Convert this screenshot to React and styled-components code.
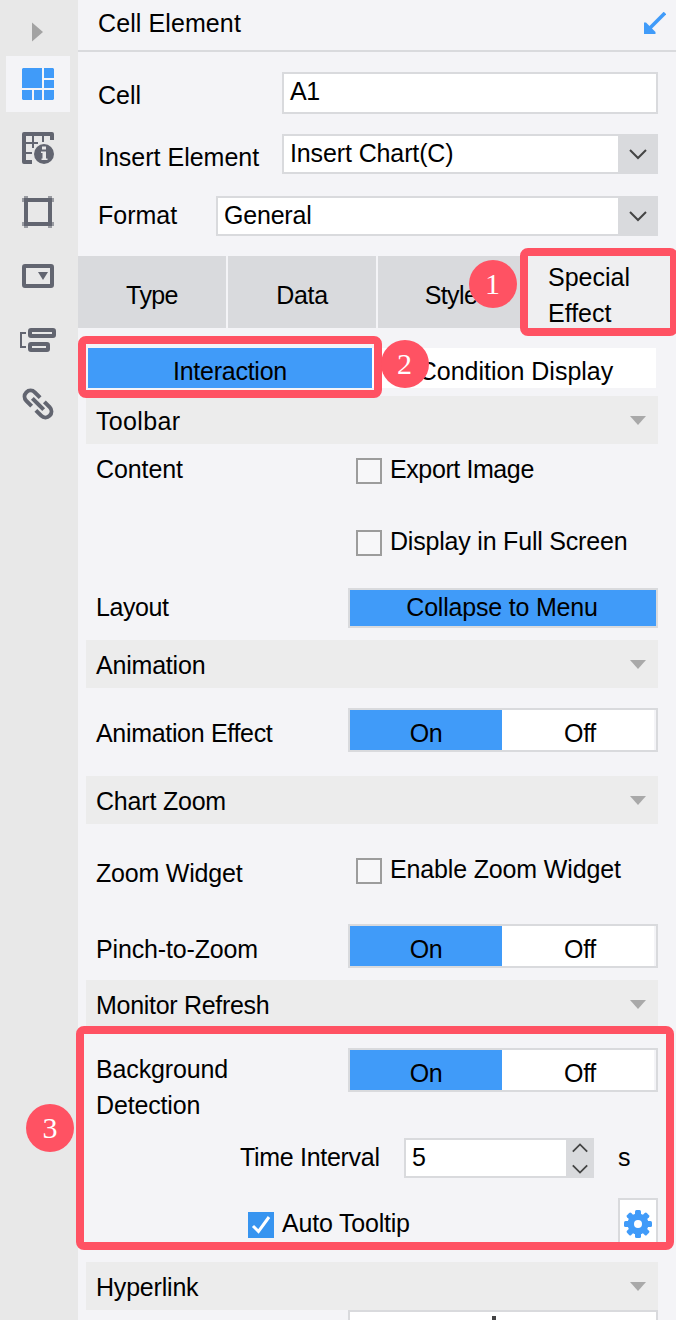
import styled, { createGlobalStyle } from "styled-components";

const GlobalStyle = createGlobalStyle`
* { box-sizing: border-box; }
body {
    margin: 0;
    background-color: #f4f4f7;
    font-family: "Liberation Sans", Arial, sans-serif;
    font-size: 25px;
    line-height: 36px;
    color: #000;
}
`

const Page = styled.div`
position: relative;
display: flex;
width: 676px;
height: 1320px;
overflow: hidden;
background-color: #f4f4f7;
`
const Sidebar = styled.nav`
flex: none;
width: 78px;
display: flex;
flex-direction: column;
align-items: center;
gap: 8px;
padding-right: 2px;
background-color: #e8e8e8;
`
const Expand = styled.div`
height: 48px;
padding-top: 22px;
line-height: 0;
`
const SideItem = styled.div`
width: 64px;
height: 56px;
display: flex;
align-items: center;
justify-content: center;
background-color: ${(p) => (p.$active ? "#f4f4f7" : "transparent")};
`
const Panel = styled.main`
flex: 1;
display: flex;
flex-direction: column;
min-width: 0;
`
const Header = styled.header`
flex: none;
display: flex;
justify-content: space-between;
height: 52px;
padding: 5px 10px 0 20px;
border-bottom: 2px solid #d9dadd;
`
const HeaderArrow = styled.svg`
margin-top: 7px;
`
const Text = styled.span`
white-space: nowrap;
letter-spacing: ${(p) => p.$spacing || 0}px;
`
const Form = styled.section`
flex: none;
display: flex;
flex-direction: column;
padding: 20px 18px 0 20px;
height: 204px;
`
const FormRow = styled.div`
display: flex;
justify-content: space-between;
margin-bottom: ${(p) => p.$gap}px;
`
const Label = styled.label`
white-space: nowrap;
width: ${(p) => (p.$width ? `${p.$width}px` : "auto")};
padding-top: ${(p) => p.$drop || 0}px;
letter-spacing: ${(p) => p.$spacing || 0}px;
`
const Field = styled.div`
display: flex;
width: ${(p) => p.$width}px;
height: ${(p) => p.$height || 40}px;
border: 2px solid #d9dadd;
background-color: #fff;
`
const Value = styled.div`
flex: 1;
padding-left: 6px;
line-height: 34px;
white-space: nowrap;
letter-spacing: ${(p) => p.$spacing || 0}px;
`
const FieldButton = styled.div`
width: ${(p) => p.$width}px;
padding-left: 2px;
display: flex;
flex-direction: column;
align-items: center;
justify-content: center;
gap: 9px;
background-color: #d9dadd;
`
const Tabs = styled.div`
flex: none;
display: grid;
grid-template-columns: 148px 148px 146px 1fr;
grid-template-rows: 72px;
gap: 2px;
height: 72px;
`
const Tab = styled.div`
display: flex;
justify-content: ${(p) => (p.$active ? "flex-start" : "center")};
padding: ${(p) => (p.$active ? "3px 20px 0 22px" : "21px 0 0")};
background-color: ${(p) => (p.$active ? "#efeff1" : "#d9dadd")};
`
const Content = styled.div`
flex: none;
display: flex;
flex-direction: column;
padding: 20px 18px 0 8px;
`
const SubTabs = styled.div`
display: grid;
grid-template-columns: 284px 1fr;
grid-template-rows: 40px;
height: 40px;
margin: 0 2px 8px;
`
const SubTab = styled.div`
display: flex;
justify-content: center;
padding: 5px 0 0 ${(p) => p.$shift || 0}px;
background-color: ${(p) => (p.$active ? "#409bf9" : "#fff")};
`
const SectionBar = styled.div`
display: flex;
justify-content: space-between;
height: 48px;
padding: 7px 11px 0 10px;
background-color: #ececec;
`
const SectionArrow = styled.svg`
margin-top: 13px;
`
const Rows = styled.div`
height: ${(p) => p.$height}px;
padding-left: 10px;
`
const Row = styled.div`
display: grid;
grid-template-columns: 252px 310px;
height: ${(p) => p.$height}px;
padding-top: ${(p) => p.$top || 0}px;
`
const Check = styled.div`
display: flex;
gap: 8px;
padding-left: ${(p) => p.$indent}px;
padding-top: ${(p) => p.$top || 0}px;
`
const Box = styled.span`
flex: none;
width: 26px;
height: 26px;
margin-top: 7px;
line-height: 0;
border: ${(p) => (p.$checked ? "none" : "2px solid #9c9c9c")};
background-color: ${(p) => (p.$checked ? "#3794f0" : "#f7f7f9")};
`
const Toggle = styled.div`
display: grid;
grid-template-columns: 152px 152px;
grid-template-rows: 40px;
height: 44px;
border: 2px solid #d9dadd;
`
const Option = styled.div`
padding: 5px 0 0 ${(p) => (p.$on ? 0 : 4)}px;
text-align: center;
letter-spacing: -0.3px;
background-color: ${(p) => (p.$on ? "#409bf9" : "#fff")};
`
const MenuButton = styled.div`
height: 40px;
border: 2px solid #d9dadd;
background-color: #409bf9;
line-height: 34px;
text-align: center;
letter-spacing: ${(p) => p.$spacing || 0}px;
padding-right: 2px;
`
const IntervalRow = styled.div`
display: flex;
height: 60px;
padding-left: 144px;
`
const Unit = styled.span`
padding: 1px 0 0 24px;
`
const TooltipRow = styled.div`
display: flex;
justify-content: space-between;
height: 64px;
`
const GearButton = styled.div`
width: 40px;
height: 52px;
display: flex;
justify-content: center;
padding-top: 10px;
border: 2px solid #d9dadd;
background-color: #fff;
`
const LinkBox = styled.div`
display: flex;
justify-content: center;
height: 44px;
margin-left: 262px;
padding: 4px 18px 0 0;
border: 2px solid #d9dadd;
background-color: #fff;
`
const Plus = styled.span`
width: 4px;
height: 24px;
background-color: #444;
`
const Frame = styled.div`
position: absolute;
left: ${(p) => p.$x}px;
top: ${(p) => p.$y}px;
width: ${(p) => p.$w}px;
height: ${(p) => p.$h}px;
border: 8px solid #ff5263;
border-radius: 8px;
`
const Badge = styled.div`
position: absolute;
left: ${(p) => p.$x}px;
top: ${(p) => p.$y}px;
width: 48px;
height: 48px;
border-radius: 50%;
background-color: #ff5263;
color: #fff;
font-family: "Liberation Serif", "Times New Roman", serif;
font-size: 30px;
line-height: 47px;
text-align: center;
`

function Chevron({ up, width = 20 }) {
    return (
        <svg width={width} height="12" viewBox="0 0 20 12" fill="none" stroke="#444" strokeWidth="2">
            <path d={up ? "M2 10l8-8 8 8" : "M2 2l8 8 8-8"} />
        </svg>
    )
}

function Section({ title, spacing }) {
    return (
        <SectionBar>
            <Text $spacing={spacing}>{title}</Text>
            <SectionArrow width="18" height="10" viewBox="0 0 18 10">
                <path d="M1 0h16L9 9z" fill="#a9a9a9" />
            </SectionArrow>
        </SectionBar>
    )
}

function OnOff() {
    return (
        <Toggle>
            <Option $on>On</Option>
            <Option>Off</Option>
        </Toggle>
    )
}

function CellIcon() {
    return (
        <svg width="32" height="32" viewBox="0 0 32 32" fill="#409bf9">
            <path d="M1 0h19v20H0V1zM22 0h9l1 1v9H22zM22 12h10v8H22zM0 22h10v10H1l-1-1zM12 22h8v10h-8zM22 22h10v9l-1 1h-9z" />
        </svg>
    )
}

function TableInfoIcon() {
    return (
        <svg width="32" height="32" viewBox="0 0 32 32" fill="none">
            <path d="M30 8V2H2v28h8" stroke="#626570" strokeWidth="4" strokeLinejoin="round" />
            <path d="M11 4v12M21 4v6M4 11h12M4 21h6" stroke="#626570" strokeWidth="2" />
            <circle cx="22" cy="22" r="10" fill="#626570" />
            <path d="M20 14.5h4v3h-4zM19 19.5h5v7h1.5V28h-6v-1.500h1V21h-1.500z" fill="#e8e8e8" />
        </svg>
    )
}

function FloatIcon() {
    return (
        <svg width="32" height="32" viewBox="0 0 32 32" fill="none" stroke="#626570">
            <path d="M4 4h24v24H4z" strokeWidth="4" />
            <path d="M0 4h2M30 4h2M0 28h2M30 28h2M4 0v2M28 0v2M4 30v2M28 30v2" strokeWidth="4" opacity=".6" />
        </svg>
    )
}

function WidgetIcon() {
    return (
        <svg width="32" height="24" viewBox="0 0 32 24">
            <rect x="2" y="2" width="28" height="20" rx="1" fill="none" stroke="#626570" strokeWidth="4" />
            <path d="M16 8h10l-5 8z" fill="#626570" />
        </svg>
    )
}

function ListIcon() {
    return (
        <svg width="36" height="24" viewBox="0 0 36 24" fill="none" stroke="#626570">
            <path d="M6 5H1v14h5" strokeWidth="2" />
            <rect x="10" y="2" width="24" height="6" rx="1" strokeWidth="4" />
            <rect x="10" y="16" width="18" height="6" rx="1" strokeWidth="4" />
        </svg>
    )
}

function LinkIcon() {
    return (
        <svg width="32" height="32" viewBox="0 0 32 32" fill="none" stroke="#626570" strokeWidth="4">
            <g transform="rotate(45 16 16)">
                <path d="M13 22H5.500a6 6 0 0 1 0-12H13" />
                <path d="M19 10h7.500a6 6 0 0 1 0 12H19" />
                <path d="M8 16h16" />
            </g>
        </svg>
    )
}

function GearIcon() {
    return (
        <svg width="28" height="28" viewBox="-14 -14 28 28">
            <g fill="#409bf9">
                {[0, 45, 90, 135].map((a) => (
                    <rect key={a} x="-3" y="-14" width="6" height="28" rx="1.5" transform={`rotate(${a})`} />
                ))}
                <circle r="10.5" />
            </g>
            <circle r="4" fill="#fff" />
        </svg>
    )
}

export default function App() {
    return (
        <>
            <GlobalStyle />
            <Page>
                <Sidebar>
                    <Expand>
                        <svg width="12" height="20" viewBox="0 0 12 20">
                            <path d="M0 0.5L11 10 0 19.5z" fill="#a3a3a3" />
                        </svg>
                    </Expand>
                    <SideItem $active><CellIcon /></SideItem>
                    <SideItem><TableInfoIcon /></SideItem>
                    <SideItem><FloatIcon /></SideItem>
                    <SideItem><WidgetIcon /></SideItem>
                    <SideItem><ListIcon /></SideItem>
                    <SideItem><LinkIcon /></SideItem>
                </Sidebar>
                <Panel>
                    <Header>
                        <Text $spacing={0.1}>Cell Element</Text>
                        <HeaderArrow width="22" height="22" viewBox="0 0 22 22">
                            <path d="M21 1L4 18" stroke="#409bf9" strokeWidth="3.6" />
                            <path d="M0 10.5h2L11.500 20v2H0z" fill="#409bf9" />
                        </HeaderArrow>
                    </Header>
                    <Form>
                        <FormRow $gap={20}>
                            <Label $drop={5}>Cell</Label>
                            <Field $width={376} $height={42}><Value $spacing={-0.5}>A1</Value></Field>
                        </FormRow>
                        <FormRow $gap={21}>
                            <Label $drop={5}>Insert Element</Label>
                            <Field $width={376}>
                                <Value $spacing={-0.12}>Insert Chart(C)</Value>
                                <FieldButton $width={38}><Chevron /></FieldButton>
                            </Field>
                        </FormRow>
                        <FormRow $gap={20}>
                            <Label $drop={1}>Format</Label>
                            <Field $width={442}>
                                <Value $spacing={-0.2}>General</Value>
                                <FieldButton $width={38}><Chevron /></FieldButton>
                            </Field>
                        </FormRow>
                    </Form>
                    <Tabs>
                        <Tab><Text $spacing={-0.6}>Type</Text></Tab>
                        <Tab><Text $spacing={-0.3}>Data</Text></Tab>
                        <Tab><Text $spacing={-0.6}>Style</Text></Tab>
                        <Tab $active>Special Effect</Tab>
                    </Tabs>
                    <Content>
                        <SubTabs>
                            <SubTab $active><Text $spacing={-0.25}>Interaction</Text></SubTab>
                            <SubTab $shift={4}><Text>Condition Display</Text></SubTab>
                        </SubTabs>

                        <Section title="Toolbar" spacing={0.35} />
                        <Rows $height={196}>
                            <Row $top={7} $height={79}>
                                <Label $spacing={-0.1}>Content</Label>
                                <Check $indent={8}><Box /><Text $spacing={-0.4}>Export Image</Text></Check>
                            </Row>
                            <Row $height={65}>
                                <span />
                                <Check $indent={8}><Box /><Text $spacing={-0.2}>Display in Full Screen</Text></Check>
                            </Row>
                            <Row $height={52}>
                                <Label $drop={1} $spacing={-0.4}>Layout</Label>
                                <MenuButton $spacing={-0.2}>Collapse to Menu</MenuButton>
                            </Row>
                        </Rows>

                        <Section title="Animation" spacing={-0.2} />
                        <Rows $height={88}>
                            <Row $top={20} $height={88}>
                                <Label $drop={7} $spacing={-0.32}>Animation Effect</Label>
                                <OnOff />
                            </Row>
                        </Rows>

                        <Section title="Chart Zoom" spacing={-0.2} />
                        <Rows $height={156}>
                            <Row $top={27} $height={100}>
                                <Label $drop={4} $spacing={-0.2}>Zoom Widget</Label>
                                <Check $indent={8}><Box /><Text $spacing={-0.15}>Enable Zoom Widget</Text></Check>
                            </Row>
                            <Row $height={56}>
                                <Label $drop={7} $spacing={-0.15}>Pinch-to-Zoom</Label>
                                <OnOff />
                            </Row>
                        </Rows>

                        <Section title="Monitor Refresh" spacing={-0.3} />
                        <Rows $height={234}>
                            <Row $top={20} $height={110}>
                                <Label $drop={3} $spacing={-0.15}>Background<br />Detection</Label>
                                <OnOff />
                            </Row>
                            <IntervalRow>
                                <Label $drop={1} $width={164} $spacing={-0.3}>Time Interval</Label>
                                <Field $width={190}>
                                    <Value>5</Value>
                                    <FieldButton $width={26}><Chevron up width={18} /><Chevron width={18} /></FieldButton>
                                </Field>
                                <Unit>s</Unit>
                            </IntervalRow>
                            <TooltipRow>
                                <Check $indent={152} $top={7}>
                                    <Box $checked>
                                        <svg width="26" height="26" viewBox="0 0 26 26" fill="none">
                                            <path d="M5 14l5.500 5.500L21 5" stroke="#fff" strokeWidth="3" />
                                        </svg>
                                    </Box>
                                    <Text $spacing={-0.2}>Auto Tooltip</Text>
                                </Check>
                                <GearButton><GearIcon /></GearButton>
                            </TooltipRow>
                        </Rows>

                        <Section title="Hyperlink" spacing={-0.2} />
                        <LinkBox><Plus /></LinkBox>
                    </Content>
                </Panel>

                <Frame $x={520} $y={248} $w={158} $h={88} />
                <Badge $x={468.5} $y={260}>1</Badge>
                <Frame $x={78} $y={336} $w={304} $h={62} />
                <Badge $x={380.5} $y={340}>2</Badge>
                <Frame $x={76} $y={1026} $w={598} $h={224} />
                <Badge $x={26} $y={1104}>3</Badge>
            </Page>
        </>
    )
}
